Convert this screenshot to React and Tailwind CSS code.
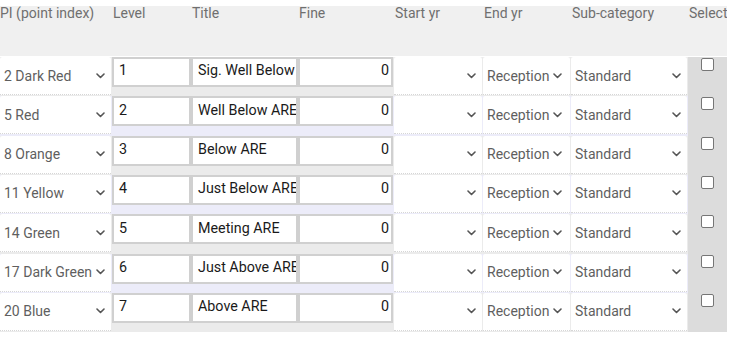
import React from "react";

const rows = [
  { pi: "2 Dark Red", level: "1", title: "Sig. Well Below", bg: "bg-[#ebebeb]" },
  { pi: "5 Red", level: "2", title: "Well Below ARE", bg: "bg-[#ececf9]" },
  { pi: "8 Orange", level: "3", title: "Below ARE", bg: "bg-[#ebebeb]" },
  { pi: "11 Yellow", level: "4", title: "Just Below ARE", bg: "bg-[#ececf9]" },
  { pi: "14 Green", level: "5", title: "Meeting ARE", bg: "bg-[#ebebeb]" },
  { pi: "17 Dark Green", level: "6", title: "Just Above ARE", bg: "bg-[#ececf9]" },
  { pi: "20 Blue", level: "7", title: "Above ARE", bg: "bg-[#ebebeb]" },
];

function Chevron() {
  return (
    <svg width="9" height="6" viewBox="0 0 9 6" className="shrink-0">
      <path d="M1 1 L4.5 4.5 L8 1" fill="none" stroke="#555" strokeWidth="1.6" strokeLinecap="round" strokeLinejoin="round" />
    </svg>
  );
}

function FakeSelect({ value, w, tight }) {
  return (
    <div
      className={`h-[38px] ${w} bg-white border-b border-dotted border-[#d6d6d6] rounded-t-[2px] flex items-center pl-[4px] pr-[6px] ${tight ? "gap-[4px]" : "justify-between"} text-[14px] text-[#5f5f5f] whitespace-nowrap overflow-hidden`}
    >
      <span className="pt-[1px]">{value}</span>
      <Chevron />
    </div>
  );
}

function Field({ value, right }) {
  return (
    <div
      className={`h-[30px] w-full bg-white border-2 border-[#d0d0d0] flex items-center pb-[2px] ${right ? "justify-end pr-[2px]" : "pl-[5px]"} text-[14.3px] text-[#1a1a1a] whitespace-nowrap overflow-hidden`}
    >
      {value}
    </div>
  );
}

export default function App() {
  const headers = [
    ["PI (point index)", "w-[112px]"],
    ["Level", "w-[79px]"],
    ["Title", "w-[107px]"],
    ["Fine", "w-[96px]"],
    ["Start yr", "w-[89px]"],
    ["End yr", "w-[88px]"],
    ["Sub-category", "w-[117px]"],
    ["Select", "w-[39px]"],
  ];
  return (
    <div className="w-[751px] h-[340px] bg-white pt-[6px] overflow-hidden" style={{ fontFamily: "Roboto, 'Liberation Sans', sans-serif" }}>
      <div className="w-[727px] h-[50px] bg-[#f0f0f0] flex text-[14px] leading-[14px] text-[#6f6f6f]">
        {headers.map(([h, w], i) => (
          <div key={h} className={`${w} ${i === 0 ? "" : "pl-[1px]"} whitespace-nowrap overflow-hidden`}>
            {h}
          </div>
        ))}
      </div>
      <div className="pt-[1px]">
        {rows.map((r) => (
          <div key={r.level} className="flex h-[39.33px] w-[727px]">
            <div className={`flex w-[688px] ${r.bg}`}>
              <div className="w-[112px] pr-[1px]">
                <FakeSelect value={r.pi} w="w-[111px]" />
              </div>
              <div className="w-[79px]">
                <Field value={r.level} />
              </div>
              <div className="w-[107px]">
                <Field value={r.title} />
              </div>
              <div className="w-[96px] pr-[1px]">
                <Field value="0" right />
              </div>
              <div className="w-[89px] pr-[1px]">
                <FakeSelect value="" w="w-[88px]" />
              </div>
              <div className="w-[88px] pr-[1px]">
                <FakeSelect value="Reception" w="w-[87px]" tight />
              </div>
              <div className="w-[117px] pr-[1px]">
                <FakeSelect value="Standard" w="w-[116px]" />
              </div>
            </div>
            <div className="w-[39px] bg-[#dcdcdc] flex justify-center pt-[1px]">
              <div className="w-[13px] h-[13px] bg-white border border-[#767676] rounded-[2px]" />
            </div>
          </div>
        ))}
      </div>
    </div>
  );
}
